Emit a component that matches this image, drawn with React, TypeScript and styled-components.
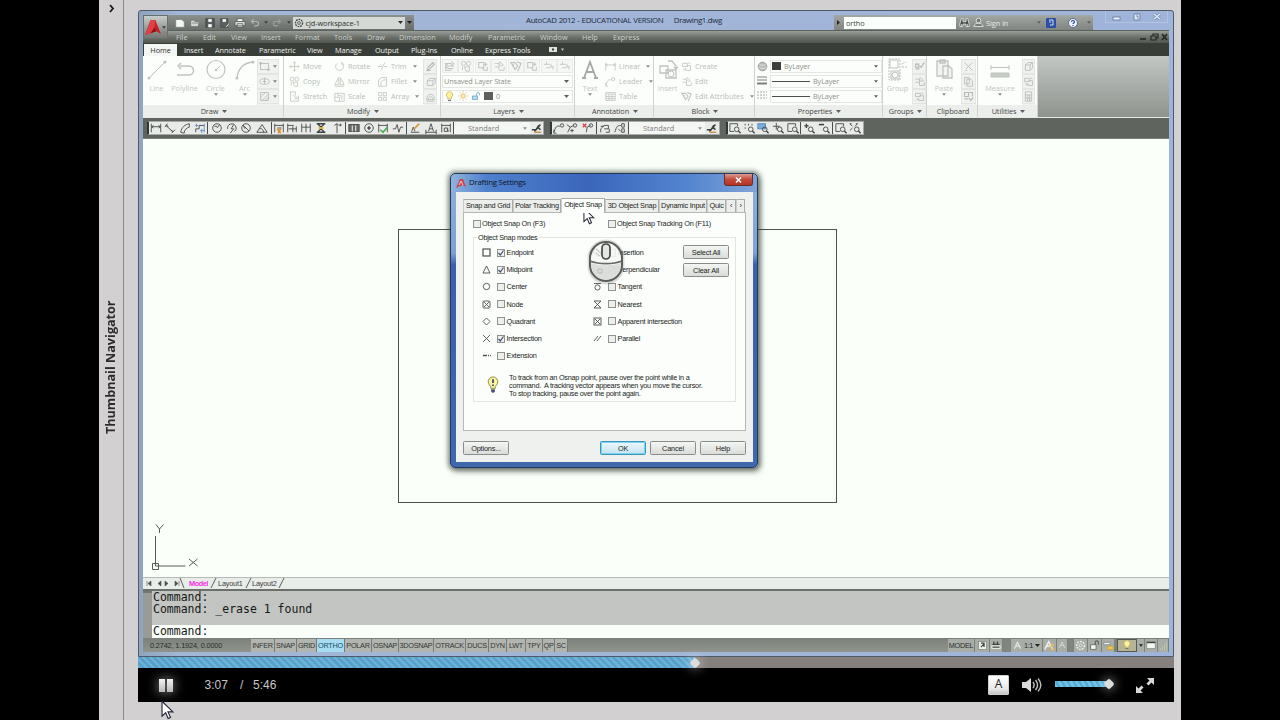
import React from "react";
import styled, { createGlobalStyle, css } from "styled-components";

const Global = createGlobalStyle`
  * { box-sizing: border-box; }
  html, body { margin: 0; padding: 0; background: #000; overflow: hidden; }
  svg { display: block; flex: none; overflow: visible; }
`;

const ui = `"Open Sans", "Noto Sans", sans-serif`;
const sans = `"Liberation Sans", Arial, sans-serif`;

/* ---------- page shell ---------- */
const Page = styled.div`
  width: 1280px; height: 720px; padding: 0 99px; background: #000;
  display: flex; overflow: hidden; position: relative;
`;
const Rail = styled.aside`
  width: 25px; flex: none; background: #d3d0d2; border-right: 1px solid #8b898b;
  display: flex; flex-direction: column; align-items: center; padding-top: 4px;
`;
const RailLabel = styled.div`
  writing-mode: vertical-rl; transform: rotate(180deg); margin-top: 285px;
  height: 136px; display: flex; align-items: center; white-space: nowrap;
  font: 700 12.6px/16px "Open Sans", sans-serif; color: #2d2b2d;
`;
const Stage = styled.main`
  width: 1057px; flex: none; background: #d3d0d1; padding: 10px 7px 0 14px;
`;
const Player = styled.div`width: 1036px; display: flex; flex-direction: column;`;

/* ---------- application window ---------- */
const AppWindow = styled.div`
  position: relative; height: 647px; width: 1036px; padding: 0 4px 4px;
  border: 1px solid #4d5a68; border-radius: 3px 3px 0 0;
  background: linear-gradient(90deg, #8ea5bd 0, #a2b6d6 40px, #9fb4da 100%);
  display: flex; flex-direction: column; font-family: ${ui};
`;
const TitleBar = styled.div`height: 19px; flex: none; display: flex; align-items: flex-start;`;
const QuickBar = styled.div`
  margin-top: 4px; width: 271px; height: 15px; padding-left: 29px; flex: none;
  display: flex; align-items: center; background: linear-gradient(#8d918e, #6a6e6b);
`;
const QuickSlot = styled.div<{ $w: number }>`
  width: ${p => p.$w}px; display: flex; justify-content: center; flex: none;
`;
const Workspace = styled.div`
  width: 112px; height: 12px; background: #d5d9d5; color: #2e322e; display: flex; align-items: center;
  gap: 2px; padding: 0 2px 0 1px; font-size: 7.4px; white-space: nowrap; flex: none; letter-spacing: -0.1px;
`;
const Spacer = styled.div`flex: 1;`;
const Gap = styled.div<{ $w: number }>`width: ${p => p.$w}px; flex: none;`;
const AppTitle = styled.div`
  margin-left: 112px; width: 308px; font-size: 7.9px; line-height: 18px; color: #1f2b3b; white-space: pre; letter-spacing: -0.36px;
  word-spacing: 0.4px;
`;
const SearchBar = styled.div`
  margin-top: 4px; width: 259px; height: 15px; background: linear-gradient(#a3a8a5, #7f8481);
  display: flex; align-items: center; flex: none; color: #e6eae6; font-size: 7.4px; white-space: nowrap; letter-spacing: -0.1px;
`;
const SearchField = styled.div`
  width: 112px; height: 12px; margin: 0 3px 0 3px; background: #fbfffb; color: #3b3f3b;
  line-height: 12px; padding-left: 2px;
`;
const WindowButtons = styled.div`
  margin-left: 12px; width: 63px; height: 12px; display: flex; align-items: center; justify-content: space-around;
  border: 1px solid #b3c3df; border-top: 0;
`;
const AppButton = styled.div`
  position: absolute; left: 4px; top: 4px; width: 25px; height: 24px; border: 1px solid #6b6f6c;
  background: linear-gradient(#c9cdca, #8b8f8c 70%, #747875); display: flex; align-items: center; padding-left: 1px; gap: 1px;
`;
const MenuBar = styled.div`
  height: 13px; flex: none; padding-left: 33px; display: flex; align-items: center;
  background: linear-gradient(#9b9f9a, #6c716b 50%, #51564f); border-top: 1px solid #5b625d;
  font-size: 7.3px; color: #cdd1cc;
`;
const MenuItem = styled.span<{ $w: number }>`width: ${p => p.$w}px; flex: none; white-space: nowrap; line-height: 10px; margin-top: -1px;`;
const TabBar = styled.div`
  height: 13px; flex: none; background: #383d38; display: flex; align-items: center; color: #eef2ed; font-size: 7.3px;
  letter-spacing: -0.07px;
`;
const RibbonTab = styled.span<{ $w: number; $on?: boolean }>`
  width: ${p => p.$w}px; flex: none; white-space: nowrap; line-height: 12px;
  ${p => p.$on && css`align-self: flex-end; background: #f3f6f2; color: #2c302c; height: 12px; line-height: 12px; text-align: center; margin: 0 7px 0 1px;`}
`;

/* ---------- ribbon ---------- */
const Ribbon = styled.div`
  height: 62px; flex: none; display: flex; border-bottom: 1px solid #e7ebe7;
  background: linear-gradient(#c3c7c3, #8e938e);
`;
const Panel = styled.section<{ $w: number }>`
  width: ${p => p.$w}px; flex: none; display: flex; flex-direction: column; background: #fbfefa;
  border-right: 1px solid #cfd3cf; overflow: hidden;
`;
const PanelBody = styled.div<{ $pl?: number }>`
  height: 49px; display: flex; padding: 2.5px 0 0 ${p => p.$pl ?? 0}px; color: #b9bdb8; font-size: 7.3px;
`;
const PanelTitle = styled.div`
  height: 12px; background: #eceeeb; color: #434743; font-size: 7.3px; display: flex; gap: 4px; letter-spacing: -0.08px;
  align-items: center; justify-content: center; white-space: nowrap; padding-left: 2px;
`;
const BigTool = styled.div<{ $w: number }>`
  width: ${p => p.$w}px; flex: none; display: flex; flex-direction: column; align-items: center;
  white-space: nowrap; line-height: 10px; color: #c3c7c2;
  & > svg:first-child { margin-bottom: 3px; }
`;
const Stack = styled.div<{ $w: number; $boxed?: boolean }>`
  width: ${p => p.$w}px; flex: none; display: flex; flex-direction: column;
  ${p => p.$boxed && css`background: #f0f2ef;`}
`;
const ToolRow = styled.div<{ $boxed?: boolean; $gap?: number }>`
  height: 15.2px; display: flex; align-items: center; gap: ${p => p.$gap ?? 3}px; white-space: nowrap; flex: none;
  ${p => p.$boxed && css`border: 1px solid #e2e5e1; justify-content: space-around; gap: 1px;`}
`;
const LayerTool = styled.div`
  width: 16px; height: 14px; border: 1px solid #e8ebe7; background: #f5f7f4; display: flex; align-items: center; justify-content: center;
`;
const Combo = styled.div<{ $w: number }>`
  width: ${p => p.$w}px; height: 13px; display: flex; align-items: center; gap: 3px; padding: 0 3px 0 1px;
  border: 1px solid #e3e6e2; background: #fbfefa; color: #8f938e; white-space: nowrap; font-size: 7.3px; letter-spacing: -0.12px;
`;
const Swatch = styled.i<{ $c: string }>`width: 9px; height: 8px; background: ${p => p.$c}; flex: none;`;
const Rule = styled.i<{ $w: number }>`width: ${p => p.$w}px; height: 1px; background: #4c504c; flex: none;`;

/* ---------- icon toolbar ---------- */
const ToolStrip = styled.div`
  height: 21px; flex: none; background: #5f645f; padding: 3px 0 0 4px; display: flex; border-bottom: 1px solid #7b807b;
`;
const StripGroup = styled.div<{ $w: number }>`
  width: ${p => p.$w}px; height: 14px; margin-right: 6px; background: #e9ebe8; border: 1px solid #a5a9a5; display: flex; align-items: center; flex: none;
  border-left: 2px solid #323632;
`;
const StripCell = styled.div<{ $w: number; $sep?: boolean }>`
  width: ${p => p.$w}px; height: 12px; flex: none; display: flex; align-items: center; justify-content: center;
  ${p => p.$sep && css`border-right: 1px solid #4a4e4a;`}
`;
const StripCombo = styled.div<{ $w: number }>`
  width: ${p => p.$w}px; height: 12px; flex: none; background: #f4f6f3; color: #7c807c; font-size: 7.3px;
  display: flex; align-items: center; padding: 0 3px 0 14px; justify-content: space-between;
`;

/* ---------- drawing area ---------- */
const Canvas = styled.div`position: relative; height: 438px; flex: none; background: #fafffa;`;
const Sheet = styled.svg`position: absolute; left: 0; top: 0;`;
const LayoutTabs = styled.div`
  height: 12px; flex: none; background: #e9edea; border-top: 1px solid #b7bbb7; display: flex; align-items: center;
  font: 7.3px/11px ${sans}; color: #3c403c; letter-spacing: -0.18px;
`;
const LayoutTab = styled.span<{ $w: number; $on?: boolean }>`
  width: ${p => p.$w}px; flex: none; white-space: nowrap; ${p => p.$on && css`color: #f62fe4; font-weight: 700; letter-spacing: -0.45px;`}
`;
const CommandArea = styled.div`
  height: 49px; flex: none; border-top: 2px solid #6b706c; background: #c2c5c1; display: flex;
  font: 11.5px/12px "DejaVu Sans Mono", monospace; color: #161816;
`;
const CommandGrip = styled.div`width: 9px; background: #989b98; border-top: 2px solid #73777a; flex: none;`;
const CommandLines = styled.div`flex: 1; display: flex; flex-direction: column;`;
const CommandLine = styled.div<{ $input?: boolean; $h: number }>`
  height: ${p => p.$h}px; padding-left: 1px; white-space: pre;
  ${p => p.$input && css`background: #fafffa; line-height: 13px;`}
`;
const StatusBar = styled.div`
  height: 14px; flex: none; background: linear-gradient(#7c807a, #8f948d); display: flex; align-items: center;
  font: 7.3px/13px ${sans}; color: #2b2e2b;
`;
const Coords = styled.div`width: 108px; padding-left: 7px; white-space: nowrap; letter-spacing: -0.13px;`;
const Toggle = styled.div<{ $w: number; $on?: boolean }>`
  width: ${p => p.$w}px; height: 13px; flex: none; text-align: center; white-space: nowrap; overflow: hidden;
  border-right: 1px solid #767a75; background: #b1b4af; color: #353835; letter-spacing: -0.28px;
  ${p => p.$on && css`background: #a8dcf2; color: #14506c;`}
`;
const StatusCell = styled.div<{ $w: number; $plain?: boolean; $warm?: boolean }>`
  width: ${p => p.$w}px; height: 13px; flex: none; display: flex; align-items: center; justify-content: center; gap: 2px;
  white-space: nowrap; border-right: 1px solid #7d817c; background: #a9ada7; letter-spacing: -0.3px;
  ${p => p.$plain && css`background: #81857f;`}
  ${p => p.$warm && css`background: #b5b494; border: 1px solid #565a50;`}
`;

/* ---------- dialog ---------- */
const Dialog = styled.div`
  position: absolute; left: 307px; top: 34px; width: 308px; height: 295px; padding: 0 4px 5px 5px;
  border: 1px solid #24395c; border-radius: 5px; font: 7.3px/9px ${sans}; color: #222522; letter-spacing: -0.22px;
  background: linear-gradient(90deg, #90b4dc 0, #4e80cc 35px, #3b66bb 45%, #5485d0 78%, #7fa3d6 100%) top / 100% 18px no-repeat,
    linear-gradient(#8fb2d9 0, #7ba2d2 27%, #3c5fae 31%, #4068ad 100%);
  box-shadow: 0 0 5px 2px rgba(50, 60, 50, 0.55), 2px 3px 6px rgba(50, 60, 50, 0.5);
  display: flex; flex-direction: column;
`;
const DialogTitle = styled.div`
  height: 18px; flex: none; display: flex; align-items: center; gap: 3px; font: 7.8px/16px ${ui}; color: #10131c; white-space: nowrap;
`;
const DialogName = styled.span`margin-top: -2px;`;
const CloseButton = styled.div`
  margin-left: auto; align-self: flex-start; width: 29px; height: 12px; border: 1px solid #6a2b28; border-top: 0;
  border-radius: 0 0 3px 3px; background: linear-gradient(#dc9c92, #c24a3a 50%, #b43325);
  display: flex; align-items: center; justify-content: center;
`;
const DialogBody = styled.div`height: 270px; background: #eff1ef; padding: 6px 7px 0 7px; display: flex; flex-direction: column;`;
const DialogTabs = styled.div`height: 14px; display: flex; align-items: flex-end; flex: none;`;
const DialogTab = styled.div<{ $w: number; $on?: boolean }>`
  width: ${p => p.$w}px; height: 13px; flex: none; white-space: nowrap; overflow: hidden; line-height: 12px; text-align: center;
  border: 1px solid #a9aca9; border-left-color: #c9ccc9; border-bottom: 0; background: #eceeec;
  ${p => p.$on && css`height: 15px; margin-bottom: -1px; background: #fcfefc; line-height: 11px; z-index: 1;`}
`;
const TabPage = styled.div`height: 219px; flex: none; border: 1px solid #b5b9b5; background: #fbfefb; padding: 5px 9px 0;`;
const CheckLine = styled.div`display: flex; height: 11px; align-items: center;`;
const Check = styled.label<{ $w: number; $gap?: number }>`
  width: ${p => p.$w}px; display: flex; align-items: center; gap: ${p => p.$gap ?? 1}px; white-space: nowrap;
`;
const Box = styled.i`
  width: 8px; height: 8px; border: 1px solid #8f938f; background: #edefed; flex: none; display: flex; align-items: center; justify-content: center;
`;
const Group = styled.fieldset`
  margin: 4px 0 0 0; padding: 0; border: 1px solid #e2e5e2; height: 169px; width: 263px; min-width: 0; display: flex; flex-direction: column;
`;
const Legend = styled.legend`margin-left: 3px; padding: 0 1px; height: 9px; font-size: 7.3px; line-height: 9px; letter-spacing: -0.27px;`;
const Modes = styled.div`display: flex; height: 122px; padding-top: 2px;`;
const ModeColumn = styled.div<{ $w: number }>`width: ${p => p.$w}px; padding-left: 8px; display: flex; flex-direction: column;`;
const ModeRow = styled.div`height: 17.2px; display: flex; align-items: center; gap: 6px; flex: none;`;
const SideButtons = styled.div`display: flex; flex-direction: column; gap: 4px; padding-top: 1px;`;
const Push = styled.button<{ $default?: boolean }>`
  width: 46px; height: 14px; padding: 0; border: 1px solid #8a8e8a; border-radius: 1.5px; flex: none; letter-spacing: -0.15px;
  background: linear-gradient(#f4f6f4, #d9dcd9); font: 7.3px/11px ${sans}; color: #1c1f1c;
  ${p => p.$default && css`border-color: #3796bd; box-shadow: inset 0 0 0 1px #7fd3f0; background: linear-gradient(#eef8fc, #c3e2f0);`}
`;
const Tip = styled.div`display: flex; gap: 10px; padding: 8px 0 0 13px; line-height: 8.2px; white-space: pre; letter-spacing: -0.26px;
  & > svg { margin-top: 4px; }
`;
const TipText = styled.p`margin: 2px 0 0;`;
const DialogFooter = styled.div`display: flex; align-items: flex-end; gap: 4px; height: 24px;`;
const Floating = styled.svg<{ $x: number; $y: number }>`position: absolute; left: ${p => p.$x}px; top: ${p => p.$y}px;`;

/* ---------- player controls ---------- */
const Seek = styled.div`height: 11px; background: #85807e; position: relative; display: flex;`;
const Played = styled.div`
  width: 557px; background: repeating-linear-gradient(45deg, #6cb2d8 0 2.5px, #58a0c9 2.5px 5px);
`;
const Knob = styled.div<{ $x: number; $y: number }>`
  position: absolute; left: ${p => p.$x}px; top: ${p => p.$y}px; width: 8px; height: 8px; transform: rotate(45deg);
  background: #dcdcdc; border-radius: 2px; box-shadow: 0 0 10px 3px rgba(255,255,255,0.28);
`;
const Controls = styled.div`
  height: 34px; background: #000; display: flex; align-items: center; color: #c8c8c8; font: 12px/14px ${sans}; padding-right: 20px;
`;
const PauseButton = styled.div`
  width: 14px; height: 13px; margin-left: 21px; display: flex; justify-content: space-between;
  filter: drop-shadow(0 0 6px rgba(255,255,255,0.65));
`;
const PauseBar = styled.i`width: 6px; background: linear-gradient(#f4f4f4, #b9b9b9);`;
const Time = styled.div`margin-left: 31.5px; display: flex; white-space: nowrap; flex: 1;`;
const TimePart = styled.span<{ $w: number }>`width: ${p => p.$w}px;`;
const Captions = styled.div`
  width: 21px; height: 20px; border-radius: 1px; background: linear-gradient(#fff, #e9e9e9 70%, #c4c4c4); border: 1px solid #cfcfcf;
  color: #222; font: 12px/16px "Open Sans", sans-serif; text-align: center; flex: none;
`;
const Volume = styled.div`
  width: 54px; height: 6px; margin-bottom: 3px; position: relative; flex: none;
  background: repeating-linear-gradient(60deg, #72c2e8 0 2.5px, #58abd4 2.5px 5px);
`;

/* ---------- icons ---------- */
const Arrow = ({ c = "#5b5f5b", s = 5 }: { c?: string; s?: number }) => (
  <svg width={s} height={3} viewBox="0 0 5 3"><path d="M0 0h5L2.5 3z" fill={c} /></svg>
);

const lens = <><circle cx="9" cy="8.5" r="2.7" /><path d="M11 10.5l2.5 2.5" strokeWidth="1.6" /></>;

const shapes: Record<string, React.ReactNode> = {
  dimH: <path d="M1.5 2v10M12.5 2v10M2 5.5h10M4 4 2 5.5 4 7M10 4l2 1.5L10 7" />,
  dimA: <path d="M2 4l8 7M1 6l3-4M9 13l4-4M3 3l2 3M8 10l3 1" />,
  arcLen: <path d="M2 12C3 6 7 3 12 2M6 13c0-4 3-6 6-7M2 12l4 1M12 2v4" />,
  ordinate: <><path d="M2 12V8h4V4h6" /><path d="M3 2v4M1 4h4M9 8v5M7 10h5M12 2v10" stroke="#5c8fc9" /></>,
  radius: <><circle cx="7" cy="7" r="5" /><path d="M7 7l3-4M4 5h3" /></>,
  jog: <path d="M2 8a5 5 0 1 1 8 3M9 3l-3 5h3l-4 5" />,
  diameter: <><circle cx="7" cy="7" r="5" /><path d="M3.5 3.5l7 7M6 8l-2-3" /></>,
  angle: <path d="M1 12h12L7 3zM4 8c2-1 4 0 5 4" />,
  quick: <><path d="M2 2v10M12 2v10M2 4h10M5 7h5" /><path d="M5 8l4 5M9 8l-3 5" stroke="#e0902c" strokeWidth="2" /></>,
  base: <path d="M2 2v10M8 5v7M12 5v7M2 4h7M3 8h9" />,
  cont: <path d="M2 2v10M7 2v10M12 2v10M2 6h10" />,
  space: <><path d="M2 2h10M2 12h10M3 2l4 4 4-4M3 12l4-4 4 4" strokeWidth="1.6" /><path d="M4 7h6" stroke="#e3b02c" strokeWidth="2" /></>,
  brk: <path d="M7 2v11M4 4l3-2 2 2M11 2v3M9.5 3.5h3" />,
  tol: <><rect x="1" y="3" width="12" height="8" fill="#6a6e6a" /><path d="M5 4v7M9 4v7" stroke="#fff" /></>,
  centre: <><circle cx="7" cy="7" r="5" /><path d="M7 5v4M5 7h4" strokeWidth="1.8" /></>,
  inspect: <><path d="M2 2v10M12 2v10M2 4h10" /><path d="M4 9l3 3 5-6" stroke="#46b04e" strokeWidth="1.8" /></>,
  jogLine: <path d="M1 8h3l2-5 2 9 2-6h3" />,
  dimEdit: <><path d="M2 12h10M3 11l2-5 2 5" /><path d="M6 8l6-6" stroke="#d99a3c" strokeWidth="2" /></>,
  textEdit: <path d="M1 12h12M4 11l3-9 3 9M5 8h4M1 9v5M13 9v5" />,
  update: <path d="M2 2v10M12 2v10M2 4h10M5 7h4v4H5zM8 8l2 3" />,
  brush: <><path d="M1 9h5l3-5M4 11l7-8M8 6l3 3" strokeWidth="1.8" /><path d="M4 12h8" stroke="#c98e48" strokeWidth="1.6" /></>,
  leader: <><path d="M1 12C4 3 5 5 8 5" /><circle cx="10.5" cy="4" r="2" /><path d="M1 9v4h3" /></>,
  leaderAdd: <><path d="M1 3l4 3-3 6M5 6l4-2" /><circle cx="10.5" cy="4" r="2" /><path d="M5 10h4M7 8v4" /></>,
  leaderDel: <><path d="M5 12l1-6 4-2" /><circle cx="10.5" cy="4" r="2" /><path d="M1 2l4 4M5 2L1 6" stroke="#d8454c" strokeWidth="1.6" /></>,
  align: <path d="M2 12V8l4-4h5v4H6M8 12h4V8M2 5h4" />,
  collect: <path d="M1 12C3 5 4 4 8 4M9 2h3v4H9zM9 8h3v4H9zM5 8l3 3" />,
  zoomWin: <><path d="M6 11H1V2h9v3" />{lens}</>,
  zoomDyn: <><path d="M2 3h1M6 3h1M2 7h1M10 3h1" strokeWidth="2" />{lens}</>,
  zoomScale: <><rect x="1" y="2" width="9" height="6" fill="#79aede" stroke="#4f86bd" />{lens}</>,
  zoomCtr: <><path d="M5 1v8M1 5h8" />{lens}</>,
  zoomIn: <><path d="M4 2v5M1.5 4.5h5" strokeWidth="1.6" />{lens}</>,
  zoomOut: <><path d="M1 3h6" strokeWidth="1.8" />{lens}</>,
  zoomExt: <><path d="M1 2l3 3M10 2L7 5M1 10l3-3M1 2h2M10 2H8" />{lens}</>,
  move: <path d="M7 1v12M1 7h12M5.5 3 7 1l1.500 2M5.5 11 7 13l1.5-2M3 5.5 1 7l2 1.5M11 5.5 13 7l-2 1.5" />,
  copy: <><circle cx="4" cy="4" r="2.5" /><circle cx="10" cy="4" r="2.5" /><path d="M5 8h6v5H7zM3 8v4" /></>,
  stretch: <path d="M2 1v12h10V6M2 1h6v5M5 5l5 5M10 7v3H7" />,
  rotate: <path d="M4 3a5 5 0 1 0 6 0M10 1v3h3" />,
  mirror: <path d="M6 2v9H1zM8 2v9h5zM1 13h12" />,
  scale: <path d="M1 3h12v10H1zM1 8h6v5M5 3v3h5v5" />,
  trim: <path d="M1 7h5M9 7h4M5 12l5-10M4 4l2 2" />,
  fillet: <path d="M2 13V5l4-3h6v11zM5 13V8l3-3h4" />,
  array: <path d="M2 2h4v4H2zM8 2h4v4H8zM2 8h4v4H2zM8 8h4v4H8z" />,
  rect: <><rect x="2" y="3" width="10" height="8" /><path d="M1 2h2v2H1zM11 10h2v2h-2z" /></>,
  ellipse: <><ellipse cx="7" cy="7" rx="6" ry="3.5" /><path d="M7 2v8M5 7h4" /></>,
  hatch: <path d="M2 2h10v10H2zM2 8l6-6M4 12l8-8M8 12l4-4" />,
  pencil: <path d="M3 12l1-4 6-6 2 2-6 6zM2 12h5" strokeWidth="1.4" />,
  explode: <path d="M3 6h7v6H3zM3 6l3-3h7l-3 3M13 3v6l-3 3" />,
  offset: <path d="M2 11c0-9 10-9 10 0zM4 11c0-5 6-5 6 0M2 13h10" />,
  layer: <path d="M2 4h6l3 3H5zM2 7l3 3h6M2 4v8h7M9 2l3 3" strokeWidth="1.2" />,
  layer2: <path d="M1 5h8M4 2v3M8 8h5M9 5l3 6M4 9h4" />,
  layer3: <path d="M2 3h6v6H2zM6 9l2 3h4V8M10 3v4M8 5h4" strokeWidth="1.2" />,
  linear: <path d="M1 2v10M13 2v10M1 5h12M3 3.5 1 5l2 1.5M11 3.5 13 5l-2 1.5" />,
  table: <path d="M1 2h12v10H1zM1 4h12M1 7h12M1 9.5h12M5 4v8M9 4v8" />,
  create: <path d="M2 3h6v4H2zM7 6h5v6H6V9M9 2l3 2M4 9v3" />,
  edit: <path d="M2 4h5v8h6V8M8 2l4 4-3 1-2-2zM2 8h5" />,
  attr: <path d="M1 3h5l3 4-3 4zM8 2l5 2-4 9M4 5v3" strokeWidth="1.4" />,
  gcheck: <path d="M2 4h4v4H2zM2 10h5M7 6l2 2 4-6" strokeWidth="1.4" />,
  cut: <path d="M2 2l8 8M12 2l-8 8M3 12h2M10 11h2" />,
  pages: <path d="M2 2h6v8H2zM5 4h5l2 2v7H5z" />,
  paint: <path d="M2 2h5v5H2zM8 2h4v5M2 10h5M8 9l2 3 3-4" strokeWidth="1.4" />,
  cube: <path d="M3 5l3-3h6v7l-3 3H3zM3 5h6v7M9 5l3-3" />,
  calc: <path d="M3 1h8v12H3zM3 5h8M6 5v8M8.5 5v8M3 9h8" />,
  newFile: <path d="M1 2h8l4 3v8H1z" fill="#f4f6f4" stroke="#777b77" />,
  open: <path d="M1 3h5l1 2h6v2l-2 5H1zM3 7h10" fill="#d3d7d3" stroke="#6d716d" />,
  save: <><rect x="1" y="1" width="12" height="12" fill="#4f545a" /><path d="M4 1h6v5H4zM4 13V8h6v5" fill="#fff" /></>,
  saveAs: <><rect x="1" y="1" width="10" height="12" fill="#5a5f66" /><path d="M3 1h6v5H3zM7 13l5-6 1.5 1-4 5z" fill="#fff" /></>,
  print: <><path d="M3 1h8v4H3z" fill="#fff" /><path d="M0 5h14v6H0zM3 8h8v5H3z" fill="#e3e6e3" /></>,
  undo: <path d="M2 5h7c4 0 4 6 0 6H6M5 2 2 5l3 3" strokeWidth="1.5" />,
  redo: <path d="M12 5H5c-4 0-4 6 0 6h3M9 2l3 3-3 3" strokeWidth="1.5" />,
  gear: <><circle cx="7" cy="7" r="2" /><circle cx="7" cy="7" r="5" strokeDasharray="2.5 1.2" strokeWidth="1.8" /></>,
  bulb: <><path d="M4.5 8a4 4 0 1 1 5 0v2h-5z" fill="#fdf3a0" stroke="#c8b560" /><path d="M5 12h4" stroke="#777" strokeWidth="1.6" /></>,
  sun: <><circle cx="7" cy="7" r="3" fill="#fff0ba" /><path d="M7 0v2M7 12v2M0 7h2M12 7h2M2 2l1.5 1.5M10.5 10.5 12 12M2 12l1.5-1.5M10.5 3.5 12 2" /></>,
  lock: <><path d="M2 7h7v5H2z" fill="#b8dcf4" /><path d="M8 7V4a2 2 0 0 1 4 0v2" /></>,
  globe: <><circle cx="7" cy="7" r="5.5" fill="#b9bdb9" stroke="#8d918d" /><path d="M3 4c2 2 6 2 8 0M2 8c3 2 7 2 10 0" stroke="#e7ebe7" /></>,
  binoc: <path d="M3 2h2v4h4V2h2l2 7v3H9V9H5v3H1V9zM3 9v3M11 9v3" fill="#4a4e4a" />,
  person: <><circle cx="7" cy="4.5" r="3" fill="#777" /><path d="M1 12c1-3 3-4 6-4s5 1 6 4z" fill="#777" /></>,
  page: <><rect x="2" y="2" width="10" height="10" fill="#eef0ee" stroke="#8a8e8a" /><path d="M5 4h4v5M5 9l4-4" strokeWidth="1.5" /></>,
  plans: <><path d="M1 8h12v4H1z" fill="#f4f6f4" stroke="#e8ebe8" /><path d="M2 6h10M4 2v4M9 2v4M2 10h10" strokeWidth="1.8" /></>,
  scaleA: <path d="M2 12l5-10 5 10M4 8h6" strokeWidth="1.8" />,
  scaleB: <><path d="M1 12 6 2l5 10M3 8h6" stroke="#eef0ee" strokeWidth="1.8" /><path d="M8 9l4-4M9 12h4" stroke="#f0bc4c" strokeWidth="2.4" /></>,
  unlock: <><path d="M2 6h7v6H2z" fill="#f4f6f4" /><path d="M8 6V3a2 2 0 0 1 4 0v3" strokeWidth="1.5" /></>,
  cards: <><path d="M1 3h8v3H1z" fill="#f4f6f4" stroke="#7d817d" /><path d="M6 8h7v4H6z" fill="#f1cb54" stroke="#caa22f" /></>,
  win: <><path d="M1 2h12v10H1z" fill="#f4f6f4" stroke="#7d817d" /><path d="M1 3.5h12" strokeWidth="2" /></>,
};

const Icon = ({ n, s = 11, c = "#3f433f", w = 1 }: { n: string; s?: number; c?: string; w?: number }) => (
  <svg width={s} height={s} viewBox="0 0 14 14" fill="none" stroke={c} strokeWidth={w}>{shapes[n]}</svg>
);

const faint = "#bfc3be";

const menu: [string, number][] = [
  ["File", 27], ["Edit", 28], ["View", 30], ["Insert", 34], ["Format", 39], ["Tools", 33], ["Draw", 32], ["Dimension", 50],
  ["Modify", 39], ["Parametric", 52], ["Window", 42], ["Help", 31], ["Express", 40],
];
const tabs: [string, number][] = [
  ["Insert", 31], ["Annotate", 44], ["Parametric", 48], ["View", 28], ["Manage", 40], ["Output", 36], ["Plug-ins", 40],
  ["Online", 34], ["Express Tools", 64],
];
const toggles: [string, number][] = [
  ["INFER", 24], ["SNAP", 22], ["GRID", 20], ["ORTHO", 28], ["POLAR", 27], ["OSNAP", 27], ["3DOSNAP", 35], ["OTRACK", 32],
  ["DUCS", 23], ["DYN", 18], ["LWT", 19], ["TPY", 17], ["QP", 12], ["SC", 13],
];

const Cells = ({ items }: { items: [string, number, boolean?][] }) => (
  <>{items.map(([n, w, sep], i) => <StripCell key={i} $w={w} $sep={sep}><Icon n={n} s={12} /></StripCell>)}</>
);

const ToolList = ({ w, items }: { w: number; items: [string, string, boolean?][] }) => (
  <Stack $w={w}>
    {items.map(([n, t, more]) => (
      <ToolRow key={t}><Icon n={n} c={faint} />{t}{more && <><Spacer /><Arrow c="#898d89" s={4} /></>}</ToolRow>
    ))}
  </Stack>
);

const IconStack = ({ w, names, arrow }: { w: number; names: string[]; arrow?: boolean }) => (
  <Stack $w={w} $boxed>
    {names.map(n => <ToolRow key={n} $boxed><Icon n={n} c="#b4b8b3" />{arrow && <Arrow c="#7d817d" s={4} />}</ToolRow>)}
  </Stack>
);

const symbols: Record<string, React.ReactNode> = {
  Endpoint: <rect x="1" y="1" width="7" height="7" strokeWidth="1.2" />,
  Midpoint: <path d="M4.5 1 8 8H1z" />,
  Center: <circle cx="4.5" cy="4.5" r="3.2" />,
  Node: <><rect x="1" y="1" width="7" height="7" rx="1" /><path d="M2 2l5 5M7 2L2 7" /></>,
  Quadrant: <path d="M4.5 1 8 4.5 4.5 8 1 4.5z" />,
  Intersection: <path d="M1 1l7 7M8 1 1 8" />,
  Extension: <path d="M1 4.5h4M6 4.5h1M8 4.5h.8" strokeWidth="1.6" />,
  Insertion: <path d="M1 1h4v3h3v4H4V5H1z" />,
  Perpendicular: <path d="M1 1v7h7M1 5h3v3" />,
  Tangent: <><circle cx="4.5" cy="5.5" r="2.6" /><path d="M1 1.5h7" /></>,
  Nearest: <path d="M1 1h7L1 8h7z" />,
  "Apparent intersection": <><rect x="1" y="1" width="7" height="7" /><path d="M2 2l5 5M7 2L2 7" /></>,
  Parallel: <path d="M1 7l4-5M4 7l4-5" />,
};
const leftModes = ["Endpoint", "Midpoint", "Center", "Node", "Quadrant", "Intersection", "Extension"];
const rightModes = ["Insertion", "Perpendicular", "Tangent", "Nearest", "Apparent intersection", "Parallel"];
const checked = new Set(["Endpoint", "Midpoint", "Intersection", "Perpendicular"]);

const Mode = ({ name }: { name: string }) => (
  <ModeRow>
    <svg width="9" height="9" viewBox="0 0 9 9" fill="none" stroke="#4b4f4b" strokeWidth="0.9">{symbols[name]}</svg>
    <Check $w={80} $gap={1.5}>
      <Box>{checked.has(name) && <svg width="6" height="6" viewBox="0 0 6 6"><path d="M.5 3 2.3 5 5.5.5" fill="none" stroke="#46506e" strokeWidth="1.2" /></svg>}</Box>
      {name}
    </Check>
  </ModeRow>
);

const Pointer = ({ x, y, s }: { x: number; y: number; s: number }) => (
  <Floating $x={x} $y={y} width={s * 0.62} height={s} viewBox="0 0 12 19">
    <path d="M1 1v14.5l3.5-3.3 2.4 5.6 2.3-1-2.4-5.5h4.7z" fill="#fff" stroke="#25283a" strokeWidth="1.1" />
  </Floating>
);

const SnapDialog = () => (
  <Dialog>
    <DialogTitle>
      <svg width="10" height="9" viewBox="0 0 10 9"><path d="M0 9 4 0h3l3 8-3-2-3 1z" fill="#d3404a" /><path d="M3 6l2-4 2 4" stroke="#f5c9cc" fill="none" /></svg>
      <DialogName>Drafting Settings</DialogName>
      <CloseButton><svg width="7" height="6" viewBox="0 0 7 6"><path d="M1 .5l5 5M6 .5l-5 5" stroke="#fff" strokeWidth="1.6" /></svg></CloseButton>
    </DialogTitle>
    <DialogBody>
      <DialogTabs>
        <DialogTab $w={50}>Snap and Grid</DialogTab>
        <DialogTab $w={48}>Polar Tracking</DialogTab>
        <DialogTab $w={44} $on>Object Snap</DialogTab>
        <DialogTab $w={54}>3D Object Snap</DialogTab>
        <DialogTab $w={48}>Dynamic Input</DialogTab>
        <DialogTab $w={19}>Quic</DialogTab>
        <DialogTab $w={10}>‹</DialogTab>
        <DialogTab $w={9}>›</DialogTab>
      </DialogTabs>
      <TabPage>
        <CheckLine>
          <Check $w={135}><Box />Object Snap On (F3)</Check>
          <Check $w={120}><Box />Object Snap Tracking On (F11)</Check>
        </CheckLine>
        <Group>
          <Legend>Object Snap modes</Legend>
          <Modes>
            <ModeColumn $w={111}>{leftModes.map(m => <Mode key={m} name={m} />)}</ModeColumn>
            <ModeColumn $w={98}>{rightModes.map(m => <Mode key={m} name={m} />)}</ModeColumn>
            <SideButtons><Push>Select All</Push><Push>Clear All</Push></SideButtons>
          </Modes>
          <Tip>
            <svg width="12" height="18" viewBox="0 0 12 19">
              <path d="M3.5 11C-1 7 1 1 6 1s7 6 2.5 10v2h-5z" fill="#fbf39b" stroke="#8a8b4a" />
              <path d="M6 3.5v4M6 9v1.6" stroke="#2a3b77" strokeWidth="1.7" /><path d="M4 14h4v2.5L6 18l-2-1.5z" fill="#50547a" />
            </svg>
            <TipText>{"To track from an Osnap point, pause over the point while in a\ncommand.  A tracking vector appears when you move the cursor.\nTo stop tracking, pause over the point again."}</TipText>
          </Tip>
        </Group>
      </TabPage>
      <DialogFooter><Push>Options...</Push><Spacer /><Push $default>OK</Push><Push>Cancel</Push><Push>Help</Push></DialogFooter>
    </DialogBody>
    <Pointer x={132} y={33} s={18} />
    <Floating $x={137} $y={66} width="36" height="44" viewBox="0 0 36 44">
      <rect x="2" y="2" width="32" height="40" rx="16" fill="none" stroke="#000" strokeOpacity="0.13" strokeWidth="5" />
      <rect x="2" y="2" width="32" height="39" rx="16" fill="#f6f8f6" fillOpacity="0.88" stroke="#5b5f5b" strokeWidth="2" />
      <path d="M3 23c9 3 21 3 30 0-1 22-29 23-30 0z" fill="#d4d7d4" fillOpacity="0.8" />
      <path d="M8 9l6 5M8 13l4 3M10 29h4v4h-4z" fill="none" stroke="#b9bdb9" />
      <path d="M2 21c9 3.5 23 3.5 32 0" fill="none" stroke="#666a66" strokeWidth="1.6" />
      <rect x="14" y="4" width="8" height="15" rx="4" fill="#e3e6e3" stroke="#444844" strokeWidth="1.7" />
    </Floating>
  </Dialog>
);

const RibbonPanels = () => (
  <Ribbon>
    <Panel $w={141}>
      <PanelBody>
        <BigTool $w={27}><svg width="20" height="21" viewBox="0 0 20 21"><path d="M2 19 18 3" stroke={faint} /><circle cx="2" cy="19" r="1.5" fill={faint} /><circle cx="18" cy="3" r="1.5" fill={faint} /></svg>Line</BigTool>
        <BigTool $w={29}><svg width="20" height="21" viewBox="0 0 20 21"><path d="M5 7h9c6 0 6 9 0 9H2M6 4 3 7l3 3" fill="none" stroke={faint} strokeWidth="1.4" /></svg>Polyline</BigTool>
        <BigTool $w={33}><svg width="20" height="21" viewBox="0 0 20 21"><circle cx="10" cy="10.5" r="9" fill="none" stroke={faint} strokeWidth="1.2" /><path d="M10 11l4-4" stroke={faint} /><circle cx="10" cy="11" r="1.2" fill={faint} /></svg>Circle<Arrow c="#898d89" s={4} /></BigTool>
        <BigTool $w={25}><svg width="20" height="21" viewBox="0 0 20 21"><path d="M2 19C3 10 8 4 18 3" fill="none" stroke={faint} strokeWidth="1.3" /><circle cx="2" cy="19" r="1.5" fill={faint} /><circle cx="18" cy="3" r="1.5" fill={faint} /></svg>Arc<Arrow c="#898d89" s={4} /></BigTool>
        <IconStack w={22} names={["rect", "ellipse", "hatch"]} arrow />
      </PanelBody>
      <PanelTitle>Draw <Arrow /></PanelTitle>
    </Panel>
    <Panel $w={157}>
      <PanelBody $pl={5}>
        <ToolList w={45} items={[["move", "Move"], ["copy", "Copy"], ["stretch", "Stretch"]]} />
        <ToolList w={43} items={[["rotate", "Rotate"], ["mirror", "Mirror"], ["scale", "Scale"]]} />
        <ToolList w={39} items={[["trim", "Trim", true], ["fillet", "Fillet", true], ["array", "Array", true]]} />
        <Stack $w={7} />
        <IconStack w={14} names={["pencil", "explode", "offset"]} />
      </PanelBody>
      <PanelTitle>Modify <Arrow /></PanelTitle>
    </Panel>
    <Panel $w={134}>
      <PanelBody $pl={1}>
        <Stack $w={131}>
          <ToolRow $gap={0.6}>{["layer", "copy", "layer3", "edit", "attr", "layer3", "layer2", "layer2"].map((n, i) => <LayerTool key={i}><Icon n={n} c="#c0c4bf" s={12} /></LayerTool>)}</ToolRow>
          <ToolRow><Combo $w={131}>Unsaved Layer State<Spacer /><Arrow /></Combo></ToolRow>
          <ToolRow><Combo $w={131}><Icon n="bulb" /><Icon n="sun" s={10} c="#dca95a" /><Icon n="lock" s={10} c="#5f9dcb" /><Swatch $c="#5c605c" />0<Spacer /><Arrow /></Combo></ToolRow>
        </Stack>
      </PanelBody>
      <PanelTitle>Layers <Arrow /></PanelTitle>
    </Panel>
    <Panel $w={79}>
      <PanelBody>
        <BigTool $w={30}><svg width="18" height="21" viewBox="0 0 18 21"><path d="M3 19 9 3l6 16M5.5 13h7M1 19h4M13 19h4" fill="none" stroke="#a5a9a5" strokeWidth="1.8" /></svg>Text<Arrow c="#898d89" s={4} /></BigTool>
        <ToolList w={43} items={[["linear", "Linear", true], ["leader", "Leader", true], ["table", "Table"]]} />
      </PanelBody>
      <PanelTitle>Annotation <Arrow /></PanelTitle>
    </Panel>
    <Panel $w={101}>
      <PanelBody>
        <BigTool $w={27}><svg width="20" height="21" viewBox="0 0 20 21"><path d="M2 7h8v7H2zM8 11h10v8H8zM10 2h4l4 5v3M16 8l2 2 2-2" fill="none" stroke={faint} strokeWidth="1.3" /><circle cx="13" cy="15" r="3" fill="none" stroke={faint} /></svg>Insert</BigTool>
        <ToolList w={70} items={[["create", "Create"], ["edit", "Edit"], ["attr", "Edit Attributes", true]]} />
      </PanelBody>
      <PanelTitle>Block <Arrow /></PanelTitle>
    </Panel>
    <Panel $w={128}>
      <PanelBody $pl={2}>
        <Stack $w={13}>
          <ToolRow><Icon n="globe" s={11} /></ToolRow>
          <ToolRow><svg width="10" height="10" viewBox="0 0 10 10"><path d="M0 1h10M0 4h10" stroke="#7b7f7b" /><path d="M0 7.5h10" stroke="#7b7f7b" strokeWidth="2" /></svg></ToolRow>
          <ToolRow><svg width="10" height="10" viewBox="0 0 10 10"><path d="M0 1h10M0 4h10M0 7h10" stroke="#a4a8a4" strokeDasharray="2 1" /></svg></ToolRow>
        </Stack>
        <Stack $w={112}>
          <ToolRow><Combo $w={112}><Swatch $c="#3b3f3b" />ByLayer<Spacer /><Arrow s={4} /></Combo></ToolRow>
          <ToolRow><Combo $w={112}><Rule $w={38} />ByLayer<Spacer /><Arrow s={4} /></Combo></ToolRow>
          <ToolRow><Combo $w={112}><Rule $w={38} />ByLayer<Spacer /><Arrow s={4} /></Combo></ToolRow>
        </Stack>
      </PanelBody>
      <PanelTitle>Properties <Arrow /></PanelTitle>
    </Panel>
    <Panel $w={44}>
      <PanelBody>
        <BigTool $w={29}><svg width="20" height="21" viewBox="0 0 20 21"><path d="M2 1h8v8H2zM3 12h8v8H3z" fill="none" stroke={faint} /><path d="M1 0h11v21H1zM14 5l4-2M14 8h5" fill="none" stroke={faint} strokeDasharray="2 1" /><circle cx="7" cy="16" r="3" fill="none" stroke={faint} /></svg>Group</BigTool>
        <IconStack w={14} names={["gcheck", "edit", "create"]} />
      </PanelBody>
      <PanelTitle>Groups <Arrow /></PanelTitle>
    </Panel>
    <Panel $w={51}>
      <PanelBody>
        <BigTool $w={34}><svg width="20" height="21" viewBox="0 0 20 21"><path d="M3 2h11v15H3zM6 1h5v3H6zM9 7h6l3 3v9H9z" fill="#f2f4f1" stroke={faint} strokeWidth="1.3" /></svg>Paste<Arrow c="#898d89" s={4} /></BigTool>
        <IconStack w={15} names={["cut", "pages", "paint"]} />
      </PanelBody>
      <PanelTitle>Clipboard</PanelTitle>
    </Panel>
    <Panel $w={60}>
      <PanelBody>
        <BigTool $w={44}><svg width="20" height="21" viewBox="0 0 20 21"><path d="M1 6v5M19 6v5M1 8.5h18" stroke={faint} /><path d="M1 14h18v4H1z" fill="#c8ccc7" stroke={faint} /></svg>Measure<Arrow c="#898d89" s={4} /></BigTool>
        <IconStack w={13} names={["cube", "create", "calc"]} />
      </PanelBody>
      <PanelTitle>Utilities <Arrow /></PanelTitle>
    </Panel>
  </Ribbon>
);

export default function App() {
  return (
    <Page>
      <Global />
      <Rail>
        <svg width="7" height="9" viewBox="0 0 7 9"><path d="M2 1l3 3.5L2 8" fill="none" stroke="#1b1b1b" strokeWidth="1.8" /></svg>
        <RailLabel>Thumbnail Navigator</RailLabel>
      </Rail>
      <Stage>
        <Player>
          <AppWindow>
            <TitleBar>
              <QuickBar>
                {["newFile", "open", "save", "saveAs", "print", "undo"].map(n => <QuickSlot key={n} $w={15.1}><Icon n={n} s={10} c={n === "undo" ? "#b5b9b5" : "#474b47"} /></QuickSlot>)}
                <QuickSlot $w={6}><Arrow c="#3d413d" s={4} /></QuickSlot>
                <QuickSlot $w={17}><Icon n="redo" c="#9ea29e" s={10} /></QuickSlot>
                <QuickSlot $w={7}><Arrow c="#3d413d" s={4} /></QuickSlot>
                <Workspace><Icon n="gear" s={10} />cjd-workspace-1<Spacer /><Arrow s={5} c="#2d312d" /></Workspace>
                <QuickSlot $w={9}><Arrow s={5} c="#1f231f" /></QuickSlot>
              </QuickBar>
              <AppTitle>{"AutoCAD 2012 - EDUCATIONAL VERSION     Drawing1.dwg"}</AppTitle>
              <SearchBar>
                <svg width="7" height="5" viewBox="0 0 7 5"><path d="M3 0l3 2.5L3 5z" fill="#262a26" /></svg>
                <SearchField>ortho</SearchField>
                <Icon n="binoc" c="#eceeec" /><QuickSlot $w={16}><Icon n="person" c="#f2f4f2" /></QuickSlot>Sign In
                <Spacer /><Arrow c="#5b5f5b" s={4} />
                <QuickSlot $w={20}><svg width="10" height="10" viewBox="0 0 10 10"><rect width="10" height="10" rx="1" fill="#2c4fa3" /><path d="M3 2h4v5H4M3 4h2" stroke="#cfe0ff" fill="none" /></svg></QuickSlot>
                <QuickSlot $w={24}><svg width="10" height="10" viewBox="0 0 10 10"><circle cx="5" cy="5" r="4.5" fill="#eef2fa" stroke="#5b6c92" /><path d="M3.5 4c0-2 3-2 3 0 0 1-1.5 1-1.5 2M5 7v1" fill="none" stroke="#2a4a95" strokeWidth="1.2" /></svg></QuickSlot>
                <QuickSlot $w={8}><Arrow c="#5b5f5b" s={4} /></QuickSlot>
              </SearchBar>
              <WindowButtons>
                <svg width="9" height="8" viewBox="0 0 9 8"><rect x="1" y="4" width="7" height="3" fill="#f2f6fc" stroke="#7085a8" /></svg>
                <svg width="8" height="8" viewBox="0 0 8 8"><path d="M1 1h6v6H1zM3 3h2v3" fill="#dfe8f6" stroke="#7085a8" /></svg>
                <svg width="8" height="7" viewBox="0 0 8 7"><path d="M1 1l6 5M7 1 1 6" stroke="#7085a8" strokeWidth="2.6" /><path d="M1 1l6 5M7 1 1 6" stroke="#eaf0fa" strokeWidth="1.2" /></svg>
              </WindowButtons>
            </TitleBar>
            <MenuBar>
              {menu.map(([t, w]) => <MenuItem key={t} $w={w}>{t}</MenuItem>)}
              <Spacer />
              <svg width="30" height="8" viewBox="0 0 30 8"><path d="M1 6h6" stroke="#252925" strokeWidth="1.6" /><path d="M12 3h5v4h-5zM14 3V1h5v4h-2" fill="none" stroke="#252925" strokeWidth="1.2" /><path d="M23 1l5 6M28 1l-5 6" stroke="#252925" strokeWidth="1.8" /></svg>
            </MenuBar>
            <TabBar>
              <RibbonTab $w={33} $on>Home</RibbonTab>
              {tabs.map(([t, w]) => <RibbonTab key={t} $w={w}>{t}</RibbonTab>)}
              <svg width="16" height="5" viewBox="0 0 16 5"><path d="M0 0h8v5H0z" fill="#dfe3df" /><path d="M3 1.5h2v2H3z" fill="#3a3e3a" /><path d="M12 1.5h3L13.5 4z" fill="#c0c4c0" /></svg>
            </TabBar>
            <RibbonPanels />
            <ToolStrip>
              <StripGroup $w={397}>
                <Cells items={[["dimH", 14], ["dimA", 14], ["arcLen", 15], ["ordinate", 16, true], ["radius", 17], ["jog", 14], ["diameter", 14], ["angle", 19, true],
                  ["quick", 13], ["base", 14], ["cont", 14], ["space", 15], ["brk", 18, true], ["tol", 16], ["centre", 14], ["inspect", 14], ["jogLine", 17, true],
                  ["dimEdit", 16], ["textEdit", 15], ["update", 16, true]]} />
                <StripCombo $w={76}>Standard<Arrow s={4} c="#8b8f8b" /></StripCombo>
                <Cells items={[["brush", 13]]} />
              </StripGroup>
              <StripGroup $w={170}>
                <Cells items={[["leader", 13], ["leaderAdd", 14], ["leaderDel", 18, true], ["align", 15], ["collect", 17, true]]} />
                <StripCombo $w={76}>Standard<Arrow s={4} c="#8b8f8b" /></StripCombo>
                <Cells items={[["brush", 14]]} />
              </StripGroup>
              <StripGroup $w={138}>
                <Cells items={[["zoomWin", 14], ["zoomDyn", 14], ["zoomScale", 14], ["zoomCtr", 15], ["zoomWin", 16, true], ["zoomIn", 15], ["zoomOut", 17, true], ["zoomWin", 15], ["zoomExt", 14]]} />
              </StripGroup>
            </ToolStrip>
            <Canvas>
              <Sheet width="1026" height="438" viewBox="0 0 1026 438" fill="none" stroke="#4e524e">
                <rect x="255.5" y="90.5" width="438" height="273" />
                <g stroke="#585c58">
                  <path d="M12.5 397v30h30M9.5 424.5h6v6h-6z" />
                  <path d="M13 385.5l3.5 4.5 4-4.5M16.5 390v4M46 420l8.5 7M54.5 420l-8.5 7" />
                </g>
              </Sheet>
              <SnapDialog />
            </Canvas>
            <LayoutTabs>
              <svg width="46" height="11" viewBox="0 0 46 11"><path d="M4 3v5M8 3v5L5 5.5zM18 3v5l-3-2.5zM22 3v5l3-2.5zM32 3v5l3-2.5zM36 3v5" fill="#4c504c" stroke="#4c504c" strokeWidth="0.6" /><path d="M37 0l4 10" stroke="#5c605c" /></svg>
              <LayoutTab $w={18} $on>Model</LayoutTab>
              <svg width="11" height="11" viewBox="0 0 11 11"><path d="M4 10 9 0" stroke="#5c605c" /></svg>
              <LayoutTab $w={26}>Layout1</LayoutTab>
              <svg width="8" height="11" viewBox="0 0 8 11"><path d="M2 10 7 0" stroke="#5c605c" /></svg>
              <LayoutTab $w={25}>Layout2</LayoutTab>
              <svg width="9" height="11" viewBox="0 0 9 11"><path d="M2 10 7 0" stroke="#5c605c" /></svg>
            </LayoutTabs>
            <CommandArea>
              <CommandGrip />
              <CommandLines>
                <CommandLine $h={12}>Command:</CommandLine>
                <CommandLine $h={22}>Command: _erase 1 found</CommandLine>
                <CommandLine $h={13} $input>Command:</CommandLine>
              </CommandLines>
            </CommandArea>
            <StatusBar>
              <Coords>0.2742, 1.1924, 0.0000</Coords>
              {toggles.map(([t, w]) => <Toggle key={t} $w={w} $on={t === "ORTHO"}>{t}</Toggle>)}
              <Spacer />
              <StatusCell $w={27}>MODEL</StatusCell>
              <StatusCell $w={15}><Icon n="page" /></StatusCell>
              <StatusCell $w={13}><Icon n="plans" s={10} /></StatusCell>
              <StatusCell $w={8} $plain />
              <StatusCell $w={32}><Icon n="scaleA" c="#e5e8e4" s={9} />1:1<Arrow c="#222" /></StatusCell>
              <StatusCell $w={14}><Icon n="scaleB" /></StatusCell>
              <StatusCell $w={11}><Icon n="scaleA" c="#d1d4d0" s={8} /></StatusCell>
              <StatusCell $w={6} $plain />
              <StatusCell $w={14}><Icon n="gear" c="#eceeec" /></StatusCell>
              <StatusCell $w={14}><Icon n="unlock" c="#5c605c" /></StatusCell>
              <StatusCell $w={13}><Icon n="cards" /></StatusCell>
              <StatusCell $w={2} $plain />
              <StatusCell $w={20} $warm><Icon n="bulb" s={10} /></StatusCell>
              <StatusCell $w={8}><Arrow s={4} c="#222" /></StatusCell>
              <StatusCell $w={13}><Icon n="win" s={10} /></StatusCell>
              <StatusCell $w={11}><svg width="9" height="9" viewBox="0 0 9 9"><path d="M1 8h7M3 6h5M5 4h3M7 2h1" stroke="#c5c9a5" strokeDasharray="1 1" strokeWidth="1.4" /></svg></StatusCell>
            </StatusBar>
            <AppButton>
              <svg width="16" height="19" viewBox="0 0 17 20">
                <path d="M0 18 6 2h5l6 15-5-3-6 2z" fill="#c0242a" /><path d="M6 2h5l-1 8-4 6-6 2z" fill="#dd4046" /><path d="M10 10l2 4-6 2z" fill="#8d1016" />
              </svg>
              <Arrow s={4} c="#3a3e3a" />
            </AppButton>
          </AppWindow>
          <Seek><Played /><Knob $x={553} $y={2} /></Seek>
          <Controls>
            <PauseButton><PauseBar /><PauseBar /></PauseButton>
            <Time><TimePart $w={35.5}>3:07</TimePart><TimePart $w={13}>/</TimePart><TimePart $w={40}>5:46</TimePart></Time>
            <Captions>A</Captions>
            <Gap $w={13} />
            <svg width="20" height="16" viewBox="0 0 20 16">
              <path d="M0 5h4l5-4v14l-5-4H0z" fill="#dadada" />
              <path d="M11 5c1.5 2 1.5 4 0 6M13.500 3c2.5 3 2.5 7 0 10M16 1.5c3.5 4 3.5 9 0 13" fill="none" stroke="#bdbdbd" strokeWidth="1.4" />
            </svg>
            <Gap $w={13} />
            <Volume><Knob $x={50} $y={-1} /></Volume>
            <Gap $w={27} />
            <svg width="18" height="17" viewBox="0 0 18 17">
              <path d="M11 1h7v7l-2.500-2.500-3 3-2-2 3-3zM7 16H0V9l2.500 2.500 3-3 2 2-3 3z" fill="#d9d9d9" />
            </svg>
          </Controls>
        </Player>
      </Stage>
      <Pointer x={161} y={700} s={20} />
    </Page>
  );
}
